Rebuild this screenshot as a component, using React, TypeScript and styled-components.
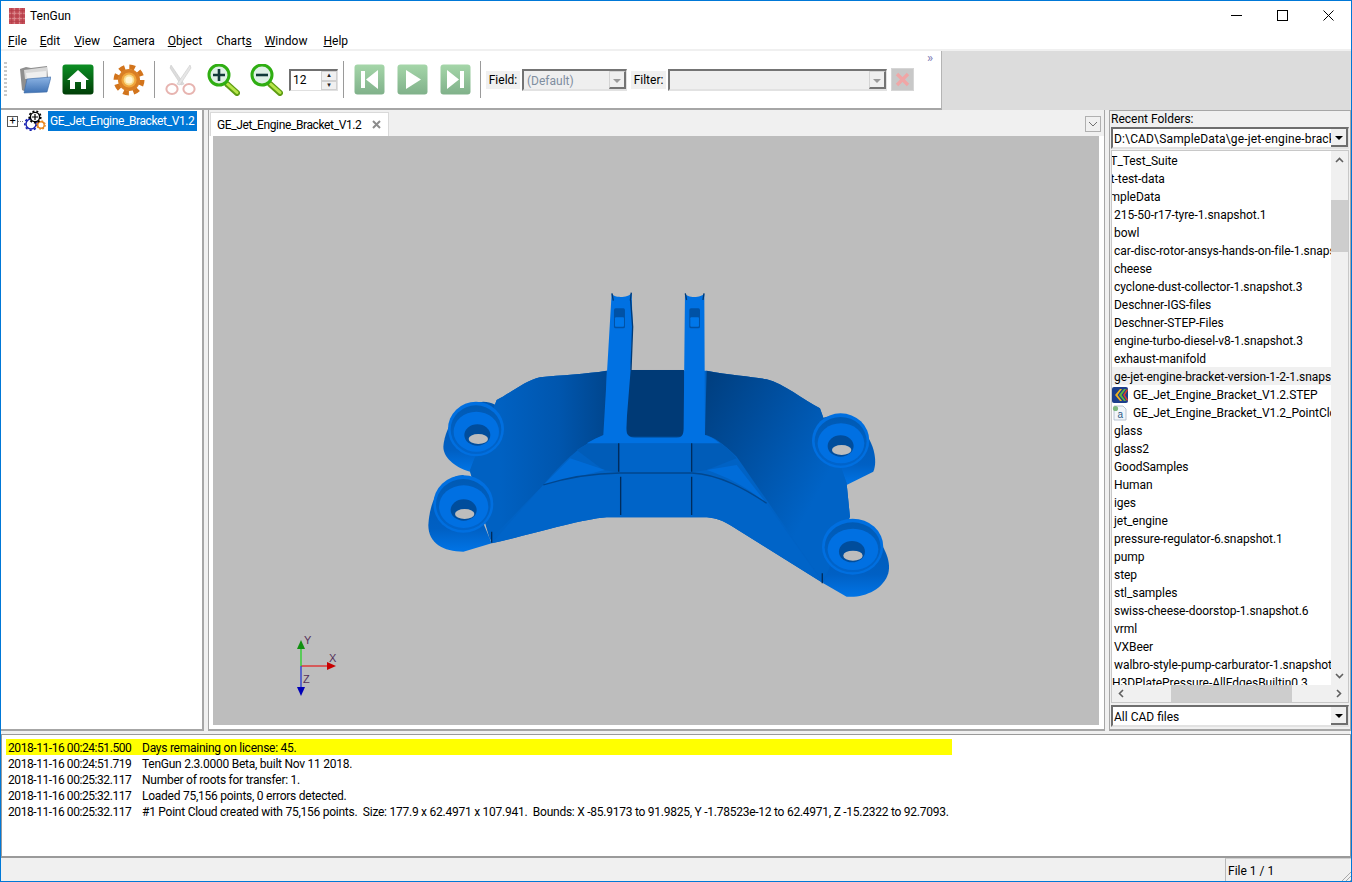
import React from "react";
import styled, { createGlobalStyle } from "styled-components";

const GlobalStyle = createGlobalStyle`
  html, body { margin: 0; padding: 0; background: #f0f0f0; }
  * { box-sizing: border-box; }
`;

const folders: { name: string; shift?: number; active?: boolean; icon?: "step" | "text" }[] = [
  { name: "IST_Test_Suite", shift: -14 },
  { name: "ast-test-data", shift: -16 },
  { name: "SampleData", shift: -18 },
  { name: "215-50-r17-tyre-1.snapshot.1" },
  { name: "bowl" },
  { name: "car-disc-rotor-ansys-hands-on-file-1.snapshot.1" },
  { name: "cheese" },
  { name: "cyclone-dust-collector-1.snapshot.3" },
  { name: "Deschner-IGS-files" },
  { name: "Deschner-STEP-Files" },
  { name: "engine-turbo-diesel-v8-1.snapshot.3" },
  { name: "exhaust-manifold" },
  { name: "ge-jet-engine-bracket-version-1-2-1.snapshot.1", active: true },
  { name: "GE_Jet_Engine_Bracket_V1.2.STEP", icon: "step" },
  { name: "GE_Jet_Engine_Bracket_V1.2_PointCloud.txt", icon: "text" },
  { name: "glass" },
  { name: "glass2" },
  { name: "GoodSamples" },
  { name: "Human" },
  { name: "iges" },
  { name: "jet_engine" },
  { name: "pressure-regulator-6.snapshot.1" },
  { name: "pump" },
  { name: "step" },
  { name: "stl_samples" },
  { name: "swiss-cheese-doorstop-1.snapshot.6" },
  { name: "vrml" },
  { name: "VXBeer" },
  { name: "walbro-style-pump-carburator-1.snapshot.1" },
  { name: "H3DPlatePressure-AllEdgesBuiltin0.3", shift: -2 },
];

const logRows = [
  { time: "2018-11-16 00:24:51.500", text: "Days remaining on license: 45.", warn: true },
  { time: "2018-11-16 00:24:51.719", text: "TenGun 2.3.0000 Beta, built Nov 11 2018." },
  { time: "2018-11-16 00:25:32.117", text: "Number of roots for transfer: 1." },
  { time: "2018-11-16 00:25:32.117", text: "Loaded 75,156 points, 0 errors detected." },
  {
    time: "2018-11-16 00:25:32.117",
    text: "#1 Point Cloud created with 75,156 points.  Size: 177.9 x 62.4971 x 107.941.  Bounds: X -85.9173 to 91.9825, Y -1.78523e-12 to 62.4971, Z -15.2322 to 92.7093.",
  },
];

const menus: [string, string, string, number][] = [
  ["", "F", "ile", 0],
  ["", "E", "dit", 13],
  ["", "V", "iew", 14],
  ["", "C", "amera", 13],
  ["", "O", "bject", 13],
  ["Chart", "s", "", 14],
  ["", "W", "indow", 13],
  ["", "H", "elp", 16],
];

const Folder = () => (
  <svg width="32" height="32" viewBox="0 0 32 32">
    <defs>
      <linearGradient id="folderFront" x1="0" y1="0" x2="0" y2="1">
        <stop offset="0" stopColor="#8db4e4" />
        <stop offset="1" stopColor="#3f72b4" />
      </linearGradient>
    </defs>
    <path d="M1 5 L7 3 L12 4 L28 2 L29 15 L5 27 L3 26 Z" fill="#8f8f8f" />
    <path d="M5 6 L28 3 L28 14 L6 15 Z" fill="#d8d8d8" />
    <path d="M7 9 L27 7 L27 14 L8 15 Z" fill="#efefef" />
    <path d="M8 15 L32 13 L28 28 L5 29 Z" fill="url(#folderFront)" stroke="#3a6aa6" strokeWidth="0.6" />
  </svg>
);

const Home = () => (
  <svg width="32" height="32" viewBox="0 0 32 32">
    <defs>
      <linearGradient id="homeBg" x1="0" y1="0" x2="0" y2="1">
        <stop offset="0" stopColor="#0c8f24" />
        <stop offset="1" stopColor="#003d06" />
      </linearGradient>
    </defs>
    <rect x="0.5" y="0.5" width="31" height="30" rx="3" fill="url(#homeBg)" />
    <path d="M16 6 L27 16 L24 16 L24 25 L19 25 L19 18 L13 18 L13 25 L8 25 L8 16 L5 16 Z" fill="#fff" />
  </svg>
);

const Gear = () => (
  <svg width="32" height="32" viewBox="0 0 32 32">
    <circle cx="16" cy="16" r="13" fill="none" stroke="#d2741c" strokeWidth="5" strokeDasharray="5.6 4.6" />
    <circle cx="16" cy="16" r="11" fill="#d97f24" />
    <circle cx="16" cy="16" r="7.6" fill="#f0a63c" />
    <circle cx="16" cy="16" r="5.4" fill="#f8dc8c" />
    <circle cx="16" cy="16" r="3.6" fill="#fff6d4" />
  </svg>
);

const Scissors = () => (
  <svg width="32" height="32" viewBox="0 0 32 32">
    <path d="M7 1 L20 20 L17 21 L6 4 Z" fill="#dcdcdc" stroke="#c4c4c4" strokeWidth="0.5" />
    <path d="M26 1 L13 20 L16 21 L27 4 Z" fill="#e6e6e6" stroke="#c4c4c4" strokeWidth="0.5" />
    <ellipse cx="8" cy="25" rx="5.6" ry="5" fill="none" stroke="#e7b4b0" strokeWidth="2" />
    <ellipse cx="25" cy="25" rx="5.6" ry="5" fill="none" stroke="#e7b4b0" strokeWidth="2" />
  </svg>
);

const Zoom: React.FC<{ plus?: boolean }> = ({ plus }) => (
  <svg width="33" height="32" viewBox="0 0 33 32">
    <path d="M20 20 L30 29" stroke="#5e9c14" strokeWidth="6" strokeLinecap="round" />
    <path d="M20.5 20 L30 28.5" stroke="#b7e64a" strokeWidth="3" strokeLinecap="round" />
    <circle cx="12" cy="11" r="10" fill="#dff0e6" stroke="#2fae12" strokeWidth="3" />
    <path d={plus ? "M6 11 H18 M12 5 V17" : "M6 11 H18"} stroke="#123a3a" strokeWidth="2.6" />
  </svg>
);

const Nav: React.FC<{ d: string }> = ({ d }) => (
  <svg width="31" height="31" viewBox="0 0 31 31">
    <defs>
      <linearGradient id="navBg" x1="0" y1="0" x2="0" y2="1">
        <stop offset="0" stopColor="#a5d6a9" />
        <stop offset="1" stopColor="#80b18a" />
      </linearGradient>
    </defs>
    <rect x="0.5" y="0.5" width="30" height="30" rx="3" fill="url(#navBg)" />
    <path d={d} fill="#fff" />
  </svg>
);

const CloseMark = () => (
  <svg width="15" height="15" viewBox="0 0 15 15">
    <path d="M2 2 L13 13 M13 2 L2 13" stroke="#f0a6a6" strokeWidth="3.4" />
  </svg>
);

const AppIcon = () => (
  <svg width="16" height="16" viewBox="0 0 16 16">
    <rect width="16" height="16" fill="#c6505a" />
    <path d="M0 5.3 H16 M0 10.6 H16 M5.3 0 V16 M10.6 0 V16" stroke="#dc8c90" strokeWidth="1" />
    <path d="M2.6 0 V16 M8 0 V16 M13.4 0 V16 M0 2.6 H16 M0 8 H16 M0 13.4 H16" stroke="#b23c48" strokeWidth="0.7" />
  </svg>
);

const TreeIcon = () => (
  <svg width="22" height="22" viewBox="0 0 22 22">
    <circle cx="7" cy="14" r="5" fill="#fff" stroke="#1620b0" strokeWidth="1.4" />
    <circle cx="7" cy="14" r="6.2" fill="none" stroke="#1620b0" strokeWidth="1.6" strokeDasharray="2.2 2.2" />
    <circle cx="17" cy="15" r="3.2" fill="#fff" stroke="#e8861c" strokeWidth="1.4" />
    <circle cx="17" cy="15" r="4.2" fill="none" stroke="#e8861c" strokeWidth="1.2" strokeDasharray="1.8 1.5" />
    <circle cx="11" cy="7" r="4.6" fill="#fff" stroke="#000" strokeWidth="1.4" />
    <circle cx="11" cy="7" r="5.8" fill="none" stroke="#000" strokeWidth="1.6" strokeDasharray="2 2" />
    <path d="M11 4 V10 M8 7 H14" stroke="#000" strokeWidth="1.2" />
  </svg>
);

const StepIcon = () => (
  <svg width="16" height="16" viewBox="0 0 16 16">
    <rect width="16" height="16" rx="2" fill="#1d3f8c" />
    <path d="M8 2 L3 8 L8 14 L10 14 L5.5 8 L10 2 Z" fill="#f0b21c" />
    <path d="M12 2 L7 8 L12 14 L14 14 L9.5 8 L14 2 Z" fill="#5fb83a" />
    <path d="M15 2 L11 8 L15 14 L16 13 L13 8 L16 3 Z" fill="#d8402c" />
  </svg>
);

const TextIcon = () => (
  <svg width="16" height="16" viewBox="0 0 16 16">
    <path d="M2 1 H11 L14 4 V15 H2 Z" fill="#f2f6fa" stroke="#a9b8c6" strokeWidth="0.8" />
    <circle cx="3.5" cy="3.5" r="2.6" fill="#7fb97f" />
    <text x="5.5" y="13" fontSize="10" fontFamily="Liberation Sans, sans-serif" fill="#2a5a86">a</text>
  </svg>
);

const Ear: React.FC<{ cx: number; cy: number; rx: number; ry: number; hx: number; hy: number }> = ({
  cx,
  cy,
  rx,
  ry,
  hx,
  hy,
}) => (
  <g>
    <ellipse cx={cx} cy={cy} rx={rx} ry={ry} fill="#006fe0" />
    <ellipse cx={cx} cy={cy + 2} rx={rx - 8} ry={ry - 9} fill="url(#dish)" />
    <ellipse cx={cx + 1} cy={cy + 8} rx={rx - 16} ry={ry - 22} fill="#0070e2" />
    <ellipse cx={hx} cy={hy} rx={39} ry={32} fill="#004d9c" />
    <ellipse cx={hx + 3} cy={hy + 12} rx={29} ry={15} fill="#bdbdbd" />
  </g>
);

const Bracket = () => (
  <svg width="886" height="589" viewBox="0 0 886 589">
    <defs>
      <linearGradient id="plateLeft" gradientUnits="userSpaceOnUse" x1="240" y1="0" x2="560" y2="0">
        <stop offset="0" stopColor="#0061c2" />
        <stop offset="0.55" stopColor="#0056ae" />
        <stop offset="1" stopColor="#00468e" />
      </linearGradient>
      <linearGradient id="plateRight" gradientUnits="userSpaceOnUse" x1="860" y1="300" x2="1260" y2="520">
        <stop offset="0" stopColor="#003f80" />
        <stop offset="0.4" stopColor="#004d9c" />
        <stop offset="1" stopColor="#0063c6" />
      </linearGradient>
      <linearGradient id="dish" x1="0" y1="0" x2="0" y2="1">
        <stop offset="0" stopColor="#005ab4" />
        <stop offset="1" stopColor="#0064cc" />
      </linearGradient>
      <linearGradient id="flange" x1="0" y1="0" x2="0" y2="1">
        <stop offset="0" stopColor="#0058b2" />
        <stop offset="0.7" stopColor="#0060c4" />
        <stop offset="1" stopColor="#0074e6" />
      </linearGradient>
    </defs>
    <g transform="translate(207 144) scale(0.3333)">
      <path d="M70,500 C75,430 130,370 190,365 C240,365 265,410 250,460 L150,575 C100,560 70,530 70,500 Z" fill="url(#flange)" />
      <path d="M25,735 C30,650 70,590 130,585 L215,790 L130,815 C70,815 25,790 25,735 Z" fill="url(#flange)" />
      <path d="M1180,440 C1200,400 1270,395 1320,440 C1360,480 1375,540 1360,575 L1280,615 Z" fill="url(#flange)" />
      <path d="M1210,780 C1230,720 1300,710 1350,750 C1390,790 1415,840 1405,880 C1390,930 1330,955 1280,950 L1210,910 Z" fill="url(#flange)" />
      <path d="M230,360 C270,340 320,300 360,292 C420,285 500,282 560,272 L860,272 C930,285 1000,290 1040,298 C1090,310 1150,360 1200,385 L1280,610 L1290,710 L1210,910 L930,735 C900,718 880,712 850,712 L560,712 C480,718 350,760 215,790 L150,575 Z" fill="#0062c4" />
      <path d="M230,360 C270,340 320,300 360,292 C420,285 500,282 560,272 L555,465 C500,485 450,520 370,615 L210,780 L150,570 Z" fill="url(#plateLeft)" />
      <path d="M860,272 C930,285 1000,290 1040,298 C1090,310 1150,360 1200,385 L1280,610 L1290,710 L1210,905 C1150,820 1040,660 950,530 C910,490 880,470 855,465 Z" fill="url(#plateRight)" />
      <rect x="620" y="270" width="172" height="205" fill="#003a76" />
      <path d="M470,510 C500,490 530,480 550,470 L855,470 C890,478 925,500 950,535 L860,570 L810,578 L600,578 L550,570 Z" fill="#005cb8" />
      <path d="M450,535 L555,570 L370,615 Z" fill="#006cd8" />
      <path d="M860,570 L950,555 L1040,670 C980,620 920,590 860,570 Z" fill="#006cd8" />
      <path d="M370,615 C450,590 520,580 600,582 L815,582 C900,585 980,630 1040,670 L1210,910 L930,735 C900,718 880,712 850,712 L560,712 C480,718 350,760 215,790 Z" fill="#0064c8" />
      <path d="M600,490 H815 V578 H600 Z" fill="#0064c8" />
      <path d="M575,40 C580,55 625,55 635,38 L638,140 L632,270 L618,445 C618,465 630,474 645,474 L770,474 C785,474 791,465 791,445 L795,40 C800,55 845,55 853,40 L855,465 C875,472 885,478 900,490 L500,490 C520,478 535,472 550,465 Z" fill="#0071e2" />
      <path d="M632,60 L638,140 L633,270" stroke="#003a76" strokeWidth="4" fill="none" />
      <path d="M576,40 L580,62 M634,38 L631,62 M796,40 L800,60 M852,40 L849,60" stroke="#003a76" strokeWidth="4" fill="none" />
      <rect x="582" y="85" width="33" height="60" rx="5" fill="#0052a6" />
      <rect x="585" y="112" width="27" height="28" rx="3" fill="#0077ea" />
      <rect x="808" y="85" width="32" height="60" rx="5" fill="#0052a6" />
      <rect x="811" y="112" width="26" height="28" rx="3" fill="#0077ea" />
      <path d="M370,615 C450,590 520,580 600,579 L815,579 C900,583 980,630 1040,670" stroke="#00478f" strokeWidth="4" fill="none" />
      <path d="M596,490 V575 M602,590 V705 M815,490 V575 M815,590 V705" stroke="#002c5c" strokeWidth="4" />
      <path d="M215,755 V788 M1207,880 V910" stroke="#002c5c" strokeWidth="4" />
      <Ear cx={168} cy={447} rx={84} ry={82} hx={172} hy={465} />
      <Ear cx={130} cy={672} rx={90} ry={86} hx={131} hy={690} />
      <Ear cx={1262} cy={482} rx={86} ry={82} hx={1262} hy={498} />
      <Ear cx={1298} cy={800} rx={92} ry={84} hx={1296} hy={815} />
    </g>
    <g fontFamily="Liberation Sans, sans-serif" fontSize="11" fill="#55305a">
      <path d="M88 530 H116" stroke="#e03030" strokeWidth="1.4" />
      <path d="M114 526 L123 530 L114 534 Z" fill="#c80000" />
      <path d="M88 530 V511" stroke="#30d030" strokeWidth="1.4" />
      <path d="M84 513 L88 504 L92 513 Z" fill="#109010" />
      <path d="M88 530 V553" stroke="#3040d0" strokeWidth="1.4" />
      <path d="M84 551 L88 560 L92 551 Z" fill="#0000b8" />
      <text x="91" y="508">Y</text>
      <text x="116" y="526">X</text>
      <text x="90" y="547">Z</text>
    </g>
  </svg>
);

const App: React.FC = () => {
  return (
    <Frame>
      <GlobalStyle />
      <TitleBar>
        <AppIcon />
        <TitleText>TenGun</TitleText>
        <WindowButtons>
          <WindowButton>
            <svg width="11" height="11" viewBox="0 0 11 11">
              <path d="M0 5.5 H11" stroke="#000" />
            </svg>
          </WindowButton>
          <WindowButton>
            <svg width="11" height="11" viewBox="0 0 11 11">
              <rect x="0.5" y="0.5" width="10" height="10" fill="none" stroke="#000" />
            </svg>
          </WindowButton>
          <WindowButton>
            <svg width="11" height="11" viewBox="0 0 11 11">
              <path d="M0.5 0.5 L10.5 10.5 M10.5 0.5 L0.5 10.5" stroke="#000" />
            </svg>
          </WindowButton>
        </WindowButtons>
      </TitleBar>

      <MenuBar>
        {menus.map(([before, key, after, gap]) => (
          <MenuItem key={key + after} $gap={gap}>
            {before}
            <u>{key}</u>
            {after}
          </MenuItem>
        ))}
      </MenuBar>

      <ToolArea>
        <Toolbar>
          <Handle />
          <Tool $gap={12}><Folder /></Tool>
          <Tool $gap={11}><Home /></Tool>
          <Separator $gap={9} />
          <Tool $gap={9}><Gear /></Tool>
          <Separator $gap={9} />
          <Tool $gap={9}><Scissors /></Tool>
          <Tool $gap={11}><Zoom plus /></Tool>
          <Tool $gap={10}><Zoom /></Tool>
          <SpinBox>
            <SpinValue>12</SpinValue>
            <SpinArrows>
              <SpinArrow>▴</SpinArrow>
              <SpinArrow>▾</SpinArrow>
            </SpinArrows>
          </SpinBox>
          <Separator $gap={5} />
          <Tool $gap={10}><Nav d="M7 7 H11 V24 H7 Z M24 6 V25 L12 15.5 Z" /></Tool>
          <Tool $gap={12}><Nav d="M9 6 L24 15.5 L9 25 Z" /></Tool>
          <Tool $gap={12}><Nav d="M20 7 H24 V24 H20 Z M7 6 L19 15.5 L7 25 Z" /></Tool>
          <Separator $gap={9} />
          <ToolLabel $gap={5} $width={34}>Field:</ToolLabel>
          <DisabledCombo $width={105}>
            <DisabledValue>(Default)</DisabledValue>
            <DisabledArrow />
          </DisabledCombo>
          <ToolLabel $gap={4} $width={35}>Filter:</ToolLabel>
          <DisabledCombo $width={219}>
            <DisabledValue />
            <DisabledArrow />
          </DisabledCombo>
          <ClearButton><CloseMark /></ClearButton>
          <Overflow>»</Overflow>
        </Toolbar>
      </ToolArea>

      <MainRow>
        <TreePanel>
          <TreeRow>
            <Expander>+</Expander>
            <TreeDots />
            <TreeIcon />
            <TreeLabel>GE_Jet_Engine_Bracket_V1.2</TreeLabel>
          </TreeRow>
        </TreePanel>

        <TabPane>
          <TabStrip>
            <Tab>
              GE_Jet_Engine_Bracket_V1.2
              <TabClose>
                <svg width="9" height="9" viewBox="0 0 9 9">
                  <path d="M1 1 L8 8 M8 1 L1 8" stroke="#8c8c8c" strokeWidth="2" />
                </svg>
              </TabClose>
            </Tab>
            <TabMenu>
              <svg width="10" height="6" viewBox="0 0 10 6">
                <path d="M1 1 L5 5 L9 1" stroke="#707070" fill="none" />
              </svg>
            </TabMenu>
          </TabStrip>
          <ViewFrame>
            <Viewport>
              <Bracket />
            </Viewport>
          </ViewFrame>
        </TabPane>

        <RecentPanel>
          <RecentTitle>Recent Folders:</RecentTitle>
          <Combo>
            <ComboValue $wide>D:\CAD\SampleData\ge-jet-engine-bracket-version-1-2-1.snapshot.1</ComboValue>
            <ComboArrow />
          </Combo>
          <ListBox>
            <ListBody>
              <ListRows>
                {folders.map((f) => (
                  <ListRow key={f.name} $active={f.active} $shift={f.shift}>
                    {f.icon === "step" && <RowIcon><StepIcon /></RowIcon>}
                    {f.icon === "text" && <RowIcon><TextIcon /></RowIcon>}
                    {f.name}
                  </ListRow>
                ))}
              </ListRows>
              <VScroll>
                <svg width="9" height="6" viewBox="0 0 9 6">
                  <path d="M1 5 L4.5 1.5 L8 5" stroke="#606060" strokeWidth="1.6" fill="none" />
                </svg>
                <VTrack>
                  <VThumb />
                </VTrack>
                <svg width="9" height="6" viewBox="0 0 9 6">
                  <path d="M1 1 L4.5 4.5 L8 1" stroke="#606060" strokeWidth="1.6" fill="none" />
                </svg>
              </VScroll>
            </ListBody>
            <HScroll>
              <svg width="6" height="9" viewBox="0 0 6 9">
                <path d="M5 1 L1.5 4.5 L5 8" stroke="#606060" strokeWidth="1.6" fill="none" />
              </svg>
              <HTrack>
                <HThumb />
              </HTrack>
              <svg width="6" height="9" viewBox="0 0 6 9">
                <path d="M1 1 L4.5 4.5 L1 8" stroke="#606060" strokeWidth="1.6" fill="none" />
              </svg>
            </HScroll>
          </ListBox>
          <Combo>
            <ComboValue>All CAD files</ComboValue>
            <ComboArrow />
          </Combo>
        </RecentPanel>
      </MainRow>

      <LogPanel>
        {logRows.map((r, i) => (
          <LogRow key={i} $warn={r.warn}>
            <LogTime>{r.time}</LogTime>
            <LogText>{r.text}</LogText>
          </LogRow>
        ))}
      </LogPanel>

      <StatusBar>
        <StatusCell>
          File 1 / 1
          <Grip>
            <svg width="12" height="12" viewBox="0 0 12 12">
              <path d="M12 1 L1 12 M12 5 L5 12 M12 9 L9 12" stroke="#a8a8a8" />
            </svg>
          </Grip>
        </StatusCell>
      </StatusBar>
    </Frame>
  );
};

const Frame = styled.div`
  width: 1352px;
  height: 882px;
  border: 1px solid #0078d7;
  background: #f0f0f0;
  display: flex;
  flex-direction: column;
  overflow: hidden;
  font-family: Roboto, "Noto Sans", sans-serif;
  font-size: 12px;
  color: #000;
`;
const TitleBar = styled.div`
  height: 29px;
  flex: none;
  background: #fff;
  display: flex;
  align-items: center;
  padding-left: 8px;
`;
const TitleText = styled.span`
  margin-left: 5px;
`;
const WindowButtons = styled.div`
  margin-left: auto;
  display: flex;
`;
const WindowButton = styled.div`
  width: 46px;
  height: 29px;
  display: flex;
  align-items: center;
  justify-content: center;
`;
const MenuBar = styled.div`
  height: 19px;
  flex: none;
  background: #fff;
  display: flex;
  align-items: center;
  padding: 3px 0 0 7px;
`;
const MenuItem = styled.span<{ $gap: number }>`
  margin-left: ${(p) => p.$gap}px;
`;
const ToolArea = styled.div`
  height: 59px;
  flex: none;
  margin-top: 2px;
  background: #dcdcdc;
`;
const Toolbar = styled.div`
  position: relative;
  width: 941px;
  height: 59px;
  background: #fff;
  border-right: 1px solid #b4b4b4;
  border-bottom: 2px solid #a6a6a6;
  display: flex;
  align-items: center;
  padding-left: 3px;
`;
const Handle = styled.div`
  width: 3px;
  height: 36px;
  flex: none;
  background: repeating-linear-gradient(to bottom, #c8c8c8 0 2px, transparent 2px 4px);
`;
const Tool = styled.div<{ $gap: number }>`
  margin-left: ${(p) => p.$gap}px;
  display: flex;
  flex: none;
`;
const Separator = styled.div<{ $gap: number }>`
  width: 1px;
  height: 37px;
  flex: none;
  background: #9a9a9a;
  margin-left: ${(p) => p.$gap}px;
`;
const SpinBox = styled.div`
  width: 49px;
  height: 22px;
  flex: none;
  margin: 1px 0 0 6px;
  display: flex;
  border: 1px solid #707070;
  border-right-color: #e0e0e0;
  border-bottom-color: #e0e0e0;
  border-top-width: 2px;
  border-left-width: 2px;
`;
const SpinValue = styled.div`
  flex: 1;
  padding-left: 2px;
  line-height: 19px;
`;
const SpinArrows = styled.div`
  width: 16px;
  display: flex;
  flex-direction: column;
`;
const SpinArrow = styled.div`
  flex: 1;
  background: #f0f0f0;
  border: 1px solid #d0d0d0;
  font-family: "DejaVu Sans", sans-serif;
  font-size: 7px;
  line-height: 7px;
  text-align: center;
  color: #222;
`;
const ToolLabel = styled.div<{ $gap: number; $width: number }>`
  margin-left: ${(p) => p.$gap}px;
  width: ${(p) => p.$width}px;
  height: 18px;
  flex: none;
  background: #f0f0f0;
  display: flex;
  align-items: center;
  justify-content: center;
  margin-right: 2px;
`;
const DisabledCombo = styled.div<{ $width: number }>`
  width: ${(p) => p.$width}px;
  height: 22px;
  flex: none;
  margin-top: 1px;
  display: flex;
  background: #efefef;
  border: 2px solid #747474;
  border-right-width: 1px;
  border-bottom-color: #e2e2e2;
  border-right-color: #e2e2e2;
`;
const DisabledValue = styled.div`
  flex: 1;
  padding-left: 3px;
  color: #7f8ea0;
  line-height: 20px;
`;
const DisabledArrow = styled.div`
  position: relative;
  width: 17px;
  background: #efefef;
  border: 1px solid #d4d4d4;
  border-right: 2px solid #747474;
  border-bottom: 2px solid #747474;
  &::after {
    content: "";
    position: absolute;
    left: 3px;
    top: 7px;
    border-left: 4px solid transparent;
    border-right: 4px solid transparent;
    border-top: 4px solid #9a9a9a;
  }
`;
const ClearButton = styled.div`
  width: 23px;
  height: 23px;
  flex: none;
  margin-left: 4px;
  background: #c8c8c8;
  border: 1px solid #d6d6d6;
  display: flex;
  align-items: center;
  justify-content: center;
`;
const Overflow = styled.div`
  position: absolute;
  top: 0;
  left: 926px;
  font-size: 13px;
  line-height: 14px;
  color: #7c7cb4;
`;
const MainRow = styled.div`
  height: 621px;
  flex: none;
  display: flex;
`;
const TreePanel = styled.div`
  width: 203px;
  flex: none;
  background: #fff;
  border-right: 2px solid #a6a6a6;
  border-bottom: 2px solid #a6a6a6;
`;
const TreeRow = styled.div`
  display: flex;
  align-items: center;
  height: 20px;
  padding-left: 6px;
  margin-top: 1px;
`;
const Expander = styled.div`
  width: 11px;
  height: 11px;
  flex: none;
  border: 1px solid #555;
  font-size: 11px;
  line-height: 8px;
  text-align: center;
`;
const TreeDots = styled.div`
  width: 6px;
  height: 1px;
  flex: none;
  background: repeating-linear-gradient(to right, #888 0 1px, transparent 1px 2px);
`;
const TreeLabel = styled.div`
  width: 149px;
  background: #0078d7;
  color: #fff;
  height: 20px;
  line-height: 20px;
  padding: 0 2px;
  margin-left: 2px;
  white-space: nowrap;
  letter-spacing: -0.38px;
`;
const TabPane = styled.div`
  width: 897px;
  flex: none;
  margin-left: 4px;
  display: flex;
  flex-direction: column;
  border-left: 1px solid #a6a6a6;
  border-right: 1px solid #a6a6a6;
  border-bottom: 2px solid #a6a6a6;
`;
const TabStrip = styled.div`
  height: 26px;
  flex: none;
  display: flex;
  align-items: flex-end;
  padding-left: 1px;
  position: relative;
`;
const Tab = styled.div`
  width: 179px;
  height: 24px;
  background: #fff;
  border: 1px solid #d9d9d9;
  border-bottom: none;
  display: flex;
  align-items: center;
  justify-content: space-between;
  padding: 0 7px 0 6px;
  white-space: nowrap;
  letter-spacing: -0.38px;
`;
const TabClose = styled.span`
  display: flex;
`;
const TabMenu = styled.div`
  position: absolute;
  right: 3px;
  top: 6px;
  width: 16px;
  height: 16px;
  border: 1px solid #b0b0b0;
  display: flex;
  align-items: center;
  justify-content: center;
`;
const ViewFrame = styled.div`
  flex: 1;
  background: #fff;
  padding: 0 5px 4px 4px;
  min-height: 0;
`;
const Viewport = styled.div`
  height: 589px;
  background: #bdbdbd;
  display: flex;
`;
const RecentPanel = styled.div`
  width: 242px;
  flex: none;
  margin-left: 4px;
  border: 1px solid #a6a6a6;
  border-bottom-width: 2px;
  padding: 0 1px 2px;
  display: flex;
  flex-direction: column;
`;
const RecentTitle = styled.div`
  height: 16px;
  line-height: 17px;
  white-space: nowrap;
`;
const Combo = styled.div`
  height: 22px;
  flex: none;
  display: flex;
  background: #fff;
  border: 2px solid #6e6e6e;
  border-right-color: #e2e2e2;
  border-bottom-color: #e2e2e2;
  border-right-width: 1px;
`;
const ComboValue = styled.div<{ $wide?: boolean }>`
  flex: 1;
  min-width: 0;
  overflow: hidden;
  white-space: nowrap;
  padding-left: 1px;
  line-height: 20px;
  letter-spacing: ${(p) => (p.$wide ? "0.15px" : "0")};
`;
const ComboArrow = styled.div`
  position: relative;
  width: 17px;
  flex: none;
  background: #f0f0f0;
  border-right: 2px solid #6e6e6e;
  border-bottom: 2px solid #6e6e6e;
  &::after {
    content: "";
    position: absolute;
    left: 4px;
    top: 7px;
    border-left: 4px solid transparent;
    border-right: 4px solid transparent;
    border-top: 4px solid #000;
  }
`;
const ListBox = styled.div`
  flex: 1;
  min-height: 0;
  margin: 1px 0 2px;
  display: flex;
  flex-direction: column;
  border: 1px solid #c8c8c8;
`;
const ListBody = styled.div`
  flex: 1;
  min-height: 0;
  display: flex;
`;
const ListRows = styled.div`
  flex: 1;
  min-width: 0;
  background: #fff;
  overflow: hidden;
`;
const ListRow = styled.div<{ $active?: boolean; $shift?: number }>`
  height: 18px;
  display: flex;
  align-items: center;
  white-space: nowrap;
  padding: 1px 0 0 2px;
  letter-spacing: -0.05px;
  margin-left: ${(p) => p.$shift ?? 0}px;
  background: ${(p) => (p.$active ? "#f0f0f0" : "transparent")};
`;
const RowIcon = styled.span`
  display: flex;
  width: 16px;
  margin: 0 5px 0 -2px;
`;
const VScroll = styled.div`
  width: 17px;
  flex: none;
  background: #f0f0f0;
  display: flex;
  flex-direction: column;
  align-items: center;
  padding: 6px 0;
`;
const VTrack = styled.div`
  flex: 1;
  align-self: stretch;
  padding-top: 37px;
  margin-bottom: 4px;
`;
const VThumb = styled.div`
  height: 52px;
  background: #cdcdcd;
`;
const HScroll = styled.div`
  height: 17px;
  flex: none;
  background: #f0f0f0;
  display: flex;
  align-items: center;
  padding: 0 6px;
`;
const HTrack = styled.div`
  flex: 1;
  height: 100%;
  padding-left: 47px;
`;
const HThumb = styled.div`
  width: 121px;
  height: 100%;
  background: #cdcdcd;
`;
const LogPanel = styled.div`
  height: 124px;
  flex: none;
  margin-top: 3px;
  background: #fff;
  border: 1px solid #9a9a9a;
  border-bottom-width: 2px;
  padding: 4px 0 0 4px;
`;
const LogRow = styled.div<{ $warn?: boolean }>`
  width: 946px;
  height: 16px;
  display: flex;
  align-items: center;
  white-space: pre;
  padding: 1px 0 0 2px;
  background: ${(p) => (p.$warn ? "#ffff00" : "transparent")};
`;
const LogTime = styled.span`
  width: 134px;
  flex: none;
  letter-spacing: -0.43px;
`;
const LogText = styled.span`
  letter-spacing: -0.25px;
`;
const StatusBar = styled.div`
  flex: 1;
  display: flex;
  justify-content: flex-end;
`;
const StatusCell = styled.div`
  position: relative;
  width: 126px;
  border-left: 1px solid #b8b8b8;
  border-top: 1px solid #d0d0d0;
  padding-left: 2px;
  line-height: 24px;
`;
const Grip = styled.div`
  position: absolute;
  right: 0;
  bottom: 0;
  display: flex;
`;

export default App;
